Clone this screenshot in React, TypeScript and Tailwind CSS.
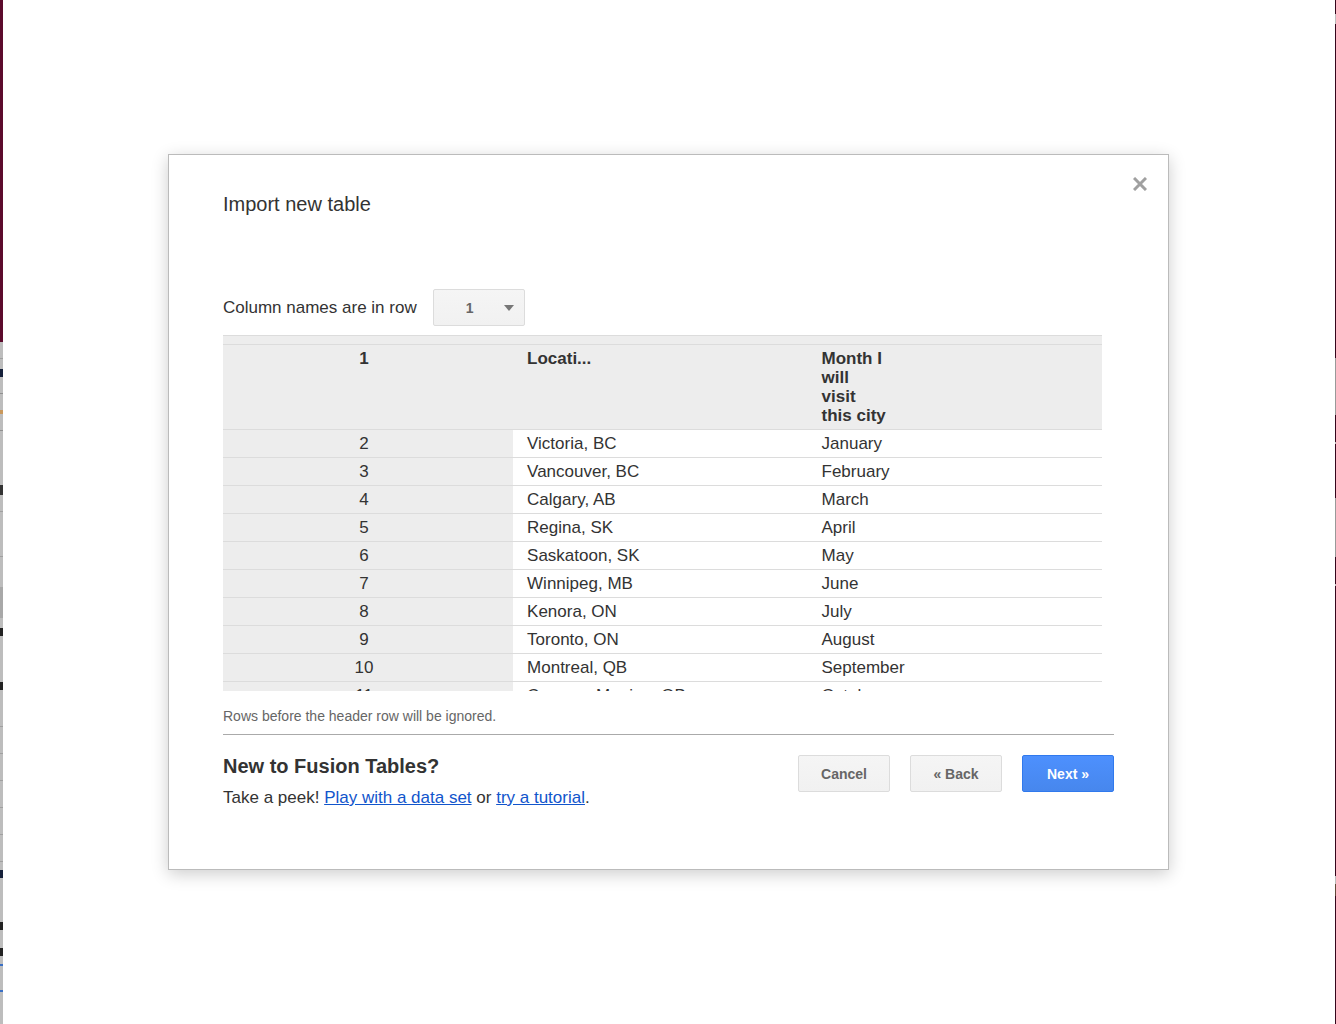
import { useState } from "react";
import { clsx } from "clsx";

type Row = {
  city: string;
  month: string;
};

const rows: Row[] = [
  { city: "Victoria, BC", month: "January" },
  { city: "Vancouver, BC", month: "February" },
  { city: "Calgary, AB", month: "March" },
  { city: "Regina, SK", month: "April" },
  { city: "Saskatoon, SK", month: "May" },
  { city: "Winnipeg, MB", month: "June" },
  { city: "Kenora, ON", month: "July" },
  { city: "Toronto, ON", month: "August" },
  { city: "Montreal, QB", month: "September" },
  { city: "Canaan, Manina, QB", month: "October" },
];

type DialogButtonProps = {
  label: string;
  primary?: boolean;
};

function DialogButton({ label, primary = false }: DialogButtonProps) {
  return (
    <button
      type="button"
      className={clsx(
        "h-[37px] w-[92px] rounded-xs border bg-linear-to-b text-sm font-bold",
        primary
          ? "border-[#3079ed] from-[#4d90fe] to-[#4787ed] text-white"
          : "border-[#dcdcdc] from-[#f5f5f5] to-[#f1f1f1] text-[#666]"
      )}
    >
      {label}
    </button>
  );
}

function HeaderRowSelect() {
  const [row, setRow] = useState("1");

  return (
    <div className="mt-[73px] flex items-center gap-4">
      <label htmlFor="header-row">Column names are in row</label>
      <div className="relative">
        <select
          id="header-row"
          value={row}
          onChange={(e) => setRow(e.target.value)}
          className="block h-[37px] w-[92px] appearance-none rounded-xs border border-[#dcdcdc] bg-linear-to-b from-[#f5f5f5] to-[#f1f1f1] pl-8 text-sm font-bold text-[#666]"
        >
          {rows.map((_, i) => (
            <option key={i}>{i + 1}</option>
          ))}
        </select>
        <svg
          viewBox="0 0 10 6"
          className="pointer-events-none absolute top-4 right-[11px] h-1.5 w-2.5 fill-[#777]"
        >
          <path d="M0 0h10L5 6z" />
        </svg>
      </div>
    </div>
  );
}

function PreviewTable() {
  return (
    <div className="mt-[9px] mr-3 h-[356px] overflow-hidden">
      <table className="w-full table-fixed border-collapse text-left leading-[19px]">
        <colgroup>
          <col className="w-[33%]" />
          <col />
          <col />
        </colgroup>
        <thead className="bg-[#ededed]">
          <tr className="h-[9px] border-t border-[#dcdcdc]">
            <td colSpan={3} />
          </tr>
          <tr className="border-t border-[#dcdcdc] align-top">
            <th className="py-1 pr-2 text-center">1</th>
            <th className="px-3.5 py-1">Locati...</th>
            <th className="px-3.5 py-1">
              <div className="w-[66px]">Month I will visit this city</div>
            </th>
          </tr>
        </thead>
        <tbody>
          {rows.map((row, i) => (
            <tr key={row.city} className="border-t border-[#dcdcdc]">
              <td className="bg-[#ededed] py-1 pr-2 text-center">{i + 2}</td>
              <td className="px-3.5 py-1">{row.city}</td>
              <td className="px-3.5 py-1">{row.month}</td>
            </tr>
          ))}
        </tbody>
      </table>
    </div>
  );
}

// Sliver of the page that shows past the left edge of the window
function LeftEdge() {
  return (
    <div className="flex w-[3px] shrink-0 flex-col bg-[#bdbdbd]">
      <div className="h-1/3 bg-[#5c0a2c]" />
      <div className="h-px bg-[#5c0a2c]" />
      <div className="mt-4 h-px bg-[#a0a0a0]" />
      <div className="mt-2.5 h-2 bg-[#15203a]" />
      <div className="mt-4 h-px bg-[#909090]" />
      <div className="mt-4 h-1 bg-[#c9985c]" />
      <div className="mt-4 h-px bg-[#909090]" />
      <div className="mt-[54px] h-2.5 bg-[#333]" />
      <div className="mt-4 h-px bg-[#a0a0a0]" />
      <div className="mt-[44px] h-px bg-[#a0a0a0]" />
      <div className="mt-[30px] h-[31px] bg-[#a8a8a8]" />
      <div className="mt-2.5 h-2 bg-[#222]" />
      <div className="mt-[46px] h-2 bg-[#222]" />
      <div className="mt-9 h-px bg-[#a0a0a0]" />
      <div className="mt-[26px] h-px bg-[#a0a0a0]" />
      <div className="mt-[26px] h-px bg-[#a0a0a0]" />
      <div className="mt-[26px] h-px bg-[#a0a0a0]" />
      <div className="mt-[26px] h-px bg-[#a0a0a0]" />
      <div className="mt-[26px] h-px bg-[#a0a0a0]" />
      <div className="mt-2 h-2 bg-[#15203a]" />
      <div className="mt-[44px] h-2 bg-[#222]" />
      <div className="mt-[18px] h-2 bg-[#222]" />
      <div className="mt-2 h-0.5 bg-[#3a6fc4]" />
      <div className="mt-6 h-0.5 bg-[#3a6fc4]" />
    </div>
  );
}

function RightEdge() {
  return (
    <div className="flex w-px shrink-0 flex-col bg-[#35061c]">
      <div className="mt-3.5 h-2.5 bg-[#bbb]" />
      <div className="mt-[334px] h-[57px] bg-[#999]" />
      <div className="mt-[27px] h-0.5 bg-[#bbb]" />
      <div className="mt-[54px] h-[59px] bg-[#999]" />
      <div className="mt-[27px] h-0.5 bg-[#bbb]" />
      <div className="mt-[290px] h-2 bg-[#bbb]" />
      <div className="h-3 bg-[#63493a]" />
    </div>
  );
}

export default function App() {
  return (
    <div className="flex min-h-screen bg-white font-['Liberation_Sans',Arial,sans-serif] text-[17px] leading-5 text-[#333]">
      <LeftEdge />
      <main className="flex flex-1 items-center justify-center pr-px">
        <div
          role="dialog"
          aria-labelledby="dialog-title"
          className="relative w-full max-w-[1001px] border border-[#bbb] bg-white px-[54px] pt-[37px] pb-[61px] shadow-[0_4px_16px_rgba(0,0,0,0.2)]"
        >
          <button type="button" aria-label="Close" className="absolute top-[21px] right-5 p-px">
            <svg viewBox="0 0 14 14" className="size-3.5 stroke-[#a0a0a0]" strokeWidth="3">
              <path d="M1 1l12 12M13 1L1 13" />
            </svg>
          </button>

          <h1 id="dialog-title" className="text-xl leading-6">
            Import new table
          </h1>

          <HeaderRowSelect />
          <PreviewTable />

          <p className="mt-[15px] text-sm leading-5 text-[#666]">
            Rows before the header row will be ignored.
          </p>
          <hr className="mt-2 border-[#aaa]" />

          <div className="mt-5 flex items-start justify-between">
            <div>
              <h2 className="text-xl leading-[22px] font-bold">New to Fusion Tables?</h2>
              <p className="mt-[11px]">
                Take a peek!{" "}
                <a href="#dataset" className="text-[#1155cc] underline">
                  Play with a data set
                </a>{" "}
                or{" "}
                <a href="#tutorial" className="text-[#1155cc] underline">
                  try a tutorial
                </a>
                .
              </p>
            </div>
            <div className="flex gap-5">
              <DialogButton label="Cancel" />
              <DialogButton label="« Back" />
              <DialogButton label="Next »" primary />
            </div>
          </div>
        </div>
      </main>
      <RightEdge />
    </div>
  );
}
